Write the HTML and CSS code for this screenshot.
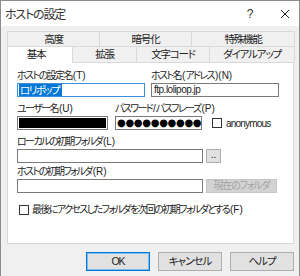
FILE: index.html
```html
<!DOCTYPE html>
<html lang="ja">
<head>
<meta charset="utf-8">
<link rel="stylesheet" href="styles.css">
</head>
<body>
<div class="window">
  <div class="titlebar">
    <span class="title">ホストの設定</span>
    <span class="help">?</span>
    <span class="close"><svg width="10" height="10" viewBox="0 0 10 10"><path d="M1 1L9 9M9 1L1 9" stroke="#222" stroke-width="1" fill="none"/></svg></span>
  </div>
  <div class="dialog">
    <div class="tabrow back">
      <div class="tab">高度</div>
      <div class="tab">暗号化</div>
      <div class="tab">特殊機能</div>
    </div>
    <div class="tabrow front">
      <div class="tab active">基本</div>
      <div class="tab">拡張</div>
      <div class="tab">文字コード</div>
      <div class="tab">ダイアルアップ</div>
    </div>
    <div class="panel">
      <div class="row row-a">
        <div class="field">
          <div class="label">ホストの設定名<span class="key">(T)</span></div>
          <div class="input focus"><span class="sel">ロリポップ</span></div>
        </div>
        <div class="field">
          <div class="label">ホスト名<span class="key">(</span>アドレス<span class="key">)(N)</span></div>
          <div class="input"><span class="latin">ftp.lolipop.jp</span></div>
        </div>
      </div>
      <div class="row row-b">
        <div class="field user">
          <div class="label">ユーザー名<span class="key">(U)</span></div>
          <div class="input redact"><span class="black"></span></div>
        </div>
        <div class="field pass">
          <div class="label">パスワード<span class="key">/</span>パスフレーズ<span class="key">(P)</span></div>
          <div class="input dots">●●●●●●●●●●</div>
        </div>
        <div class="check anon">
          <span class="cb"></span>
          <span class="anon-text">anonymous</span>
        </div>
      </div>
      <div class="row row-c">
        <div class="label">ローカルの初期フォルダ<span class="key">(L)</span></div>
        <div class="line">
          <div class="input wide"></div>
          <div class="btn small">..</div>
        </div>
      </div>
      <div class="row row-d">
        <div class="label">ホストの初期フォルダ<span class="key">(R)</span></div>
        <div class="line">
          <div class="input wide"></div>
          <div class="btn disabled">現在のフォルダ</div>
        </div>
      </div>
      <div class="row row-e check">
        <span class="cb"></span>
        <span>最後にアクセスしたフォルダを次回の初期フォルダとする<span class="key">(F)</span></span>
      </div>
    </div>
    <div class="buttons">
      <div class="btn push default">OK</div>
      <div class="btn push">キャンセル</div>
      <div class="btn push">ヘルプ</div>
    </div>
  </div>
</div>
</body>
</html>
```

FILE: styles.css
```css
html, body {
  margin: 0;
  padding: 0;
  background: #f0f0f0;
}

body {
  font-family: "Liberation Sans", "Noto Sans CJK JP", sans-serif;
  font-size: 10px;
  letter-spacing: -1.6px;
  font-feature-settings: "palt" 1;
  color: #222;
}

.key {
  letter-spacing: 0;
  font-size: 10px;
  margin-left: 1px;
}

.window {
  width: 300px;
  height: 276px;
  box-sizing: border-box;
  border: 1px solid #8c8c8c;
  border-bottom: 0;
  display: flex;
  flex-direction: column;
  overflow: hidden;
  background: #f0f0f0;
}

.titlebar {
  flex: none;
  height: 25px;
  background: #fff;
  display: flex;
  align-items: center;
  padding-left: 4px;
}

.title {
  flex: 1;
  font-size: 12px;
  letter-spacing: -1.2px;
  color: #333;
}

.help {
  width: 12px;
  margin-right: 24px;
  text-align: center;
  font-size: 12px;
  letter-spacing: 0;
  color: #333;
}

.close {
  width: 10px;
  height: 10px;
  margin-right: 9px;
  display: flex;
}

.dialog {
  flex: 1;
  padding: 5px 4px 0 6px;
}

.tabrow {
  display: grid;
}

.back {
  grid-template-columns: 93px 92px 103px;
  height: 15px;
}

.front {
  grid-template-columns: 66px 64px 73px 85px;
  height: 16px;
}

.tab {
  box-sizing: border-box;
  border-top: 1px solid #d9d9d9;
  border-right: 1px solid #d9d9d9;
  background: #f0f0f0;
  text-align: center;
  line-height: 14px;
  font-size: 10.5px;
  letter-spacing: -1.2px;
}

.front .tab {
  line-height: 15px;
}

.tab:first-child {
  border-left: 1px solid #d9d9d9;
}

.tab.active {
  background: #fff;
  margin-bottom: -1px;
  position: relative;
  z-index: 1;
  padding-right: 8px;
}

.panel {
  width: 287px;
  height: 182px;
  box-sizing: border-box;
  background: #fff;
  border: 1px solid #d9d9d9;
  padding: 7px 0 0 9px;
}

.label {
  height: 12px;
  line-height: 12px;
  margin-bottom: 1px;
  white-space: nowrap;
}

.input {
  height: 14px;
  box-sizing: border-box;
  border: 1px solid #7a7a7a;
  background: #fff;
  line-height: 12px;
  padding-left: 1px;
  white-space: nowrap;
  overflow: hidden;
}

.input.focus {
  border-color: #3c8fd8;
}

.sel {
  display: inline-block;
  background: #0078d7;
  color: #fff;
  line-height: 12px;
  font-size: 10.5px;
  padding: 0 3px 0 1px;
}

.latin {
  font-size: 10px;
  letter-spacing: -0.5px;
  padding-left: 1px;
}

.row-a {
  display: grid;
  grid-template-columns: 128px 128px;
  column-gap: 6px;
}

.row-b {
  margin-top: 6px;
  display: flex;
  align-items: flex-end;
}

.user {
  width: 91px;
}

.pass {
  width: 87px;
  margin-left: 7px;
}

.redact {
  padding: 1px;
}

.black {
  display: block;
  height: 100%;
  background: #000;
}

.dots {
  font-family: "DejaVu Sans", sans-serif;
  font-size: 10px;
  letter-spacing: -0.3px;
  line-height: 12px;
  padding-left: 1px;
  color: #000;
}

.check {
  display: flex;
  align-items: center;
  gap: 4px;
}

.anon {
  margin-left: 10px;
  height: 14px;
}

.anon-text {
  font-size: 10px;
  letter-spacing: -0.8px;
}

.cb {
  width: 10px;
  height: 10px;
  box-sizing: border-box;
  border: 1px solid #333;
  background: #fff;
  flex: none;
}

.row-c {
  margin-top: 6px;
}

.row-d {
  margin-top: 3px;
}

.line {
  display: flex;
  gap: 3px;
}

.input.wide {
  width: 186px;
}

.btn {
  box-sizing: border-box;
  border: 1px solid #adadad;
  background: #e1e1e1;
  text-align: center;
  white-space: nowrap;
}

.btn.small {
  width: 15px;
  height: 14px;
  line-height: 10px;
  letter-spacing: 0;
  font-size: 10px;
}

.btn.disabled {
  width: 71px;
  height: 14px;
  line-height: 12px;
  background: #d3d3d3;
  border-color: #c6c6c6;
  color: #a2a2a2;
  letter-spacing: -1.2px;
}

.row-e {
  margin-top: 11px;
  margin-left: 2px;
  height: 12px;
  line-height: 12px;
  gap: 3px;
}

.buttons {
  display: flex;
  justify-content: flex-end;
  gap: 8px;
  margin-top: 8px;
  padding-right: 1px;
}

.btn.push {
  width: 64px;
  height: 19px;
  line-height: 17px;
  font-size: 10.5px;
  letter-spacing: -1px;
}

.btn.default {
  border-color: #0078d7;
  box-shadow: inset 0 0 0 1px #7fbbeb;
}
```
